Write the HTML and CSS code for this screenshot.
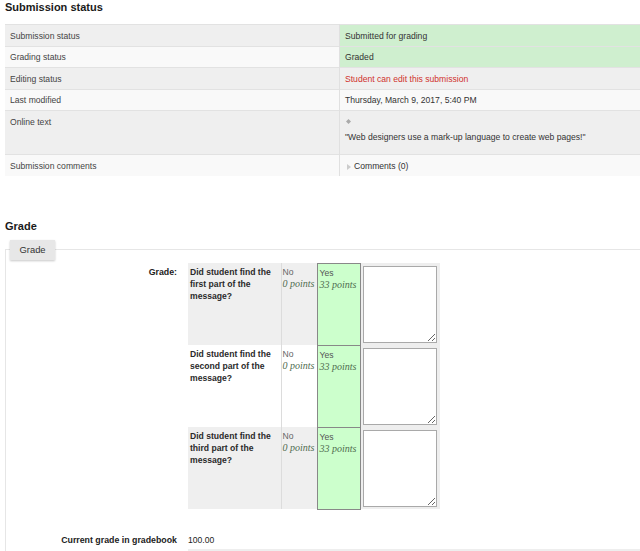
FILE: index.html
```html
<!doctype html>
<html lang="en">
<head>
  <meta charset="utf-8">
  <title>Submission status</title>
  <link rel="stylesheet" href="styles.css">
</head>
<body>
	<div class="page">
		<h3 class="sect">Submission status</h3>
		<table class="status">
			<tr class="odd">
				<td class="lbl">Submission status</td>
				<td class="ok">Submitted for grading</td>
			</tr>
			<tr class="even">
				<td class="lbl">Grading status</td>
				<td class="ok">Graded</td>
			</tr>
			<tr class="odd">
				<td class="lbl">Editing status</td>
				<td class="warn">Student can edit this submission</td>
			</tr>
			<tr class="even">
				<td class="lbl">Last modified</td>
				<td>Thursday, March 9, 2017, 5:40 PM</td>
			</tr>
			<tr class="odd">
				<td class="lbl">Online text</td>
				<td>
					<div class="expand"><svg width="5" height="5" viewBox="0 0 5 5"><path d="M2.5 0 L5 2.5 L2.5 5 L0 2.5 Z" fill="#aaa"/></svg></div>
					<p class="quote">"Web designers use a mark-up language to create web pages!"</p>
				</td>
			</tr>
			<tr class="even">
				<td class="lbl">Submission comments</td>
				<td><span class="tri"></span>Comments (0)</td>
			</tr>
		</table>

		<h3 class="sect grade-h">Grade</h3>
		<fieldset class="grade-box">
			<legend>Grade</legend>
			<div class="frow">
				<div class="flabel">Grade:</div>
				<div class="fval">
					<table class="rubric">
						<col class="c-crit"><col class="c-no"><col class="c-yes"><col class="c-rem">
						<tr class="r-grey">
							<td class="crit">Did student find the first part of the message?</td>
							<td class="level">No<div class="score">0 points</div></td>
							<td class="level checked">Yes<div class="score">33 points</div></td>
							<td class="remark"><textarea></textarea></td>
						</tr>
						<tr class="r-white">
							<td class="crit">Did student find the second part of the message?</td>
							<td class="level">No<div class="score">0 points</div></td>
							<td class="level checked">Yes<div class="score">33 points</div></td>
							<td class="remark"><textarea></textarea></td>
						</tr>
						<tr class="r-grey">
							<td class="crit">Did student find the third part of the message?</td>
							<td class="level">No<div class="score">0 points</div></td>
							<td class="level checked">Yes<div class="score">33 points</div></td>
							<td class="remark"><textarea></textarea></td>
						</tr>
					</table>
				</div>
			</div>
			<div class="frow current">
				<div class="flabel">Current grade in gradebook</div>
				<div class="fval">100.00</div>
			</div>
			<div class="frow">
				<div class="flabel"></div>
				<div class="fval next"></div>
			</div>
		</fieldset>
	</div>
</body>
</html>
```

FILE: styles.css
```css
html,body{
	margin:0; padding:0;
	background:#fff;
	font-family:"Liberation Sans", Arial, sans-serif;
	font-size:8.6px;
	color:#333;
}
.page{ padding-left:5px; }

.sect{
	margin:0 0 10px 0;
	padding-top:1px;
	font-size:11px;
	line-height:13px;
	font-weight:bold;
	color:#1a1a1a;
}
.grade-h{ margin-top:43px; margin-bottom:7px; }

/* submission status table */
table.status{ width:100%; border-collapse:collapse; }
table.status td{
	padding:4.6px 5px 4px 5px;
	line-height:12px;
	vertical-align:top;
	border-top:1px solid #e2e2e2;
}
table.status td.lbl{ width:324px; border-right:1px solid #e0e0e0; color:#444; }
table.status tr.odd td{ background:#efefef; }
table.status tr.even td{ background:#f9f9f9; }
table.status tr td.ok{ background:#cfefcf; }
table.status td.warn{ color:#d0312d; }
.expand{ height:12px; padding-left:1px; }
.expand svg{ display:block; margin-top:3px; }
.quote{ margin:0 0 7px 0; }
.tri{
	display:inline-block;
	width:0; height:0;
	border-left:4px solid #ccc;
	border-top:3.5px solid transparent;
	border-bottom:3.5px solid transparent;
	margin:0 3px 0 2px;
	vertical-align:-1px;
}

/* grade form */
fieldset.grade-box{
	margin:0;
	padding:3px 0 0 0;
	border:1px solid #e6e6e6;
	border-right:none;
	min-width:0;
}
fieldset.grade-box > legend{
	margin-left:4px;
	padding:0 9.5px;
	height:20px;
	line-height:20px;
	font-size:9.4px;
	color:#333;
	background:#e7e7e7;
	box-shadow:0 1px 2px rgba(0,0,0,0.22);
}
.frow{
	display:grid;
	grid-template-columns:171px 1fr;
	column-gap:11px;
}
.flabel{
	text-align:right;
	font-weight:bold;
	font-size:8.8px;
	line-height:12px;
	padding-top:3px;
	color:#222;
}
.frow.current{ margin-top:24px; }
.frow.current .flabel{ padding-top:0; }
.frow.current .fval{ line-height:12px; color:#222; }
.fval.next{ margin-top:3px; height:40px; background:#eee; }

/* rubric */
table.rubric{
	width:252px;
	table-layout:fixed;
	border-collapse:collapse;
}
col.c-crit{ width:93px; }
col.c-no{ width:36px; }
col.c-yes{ width:43px; }
col.c-rem{ width:80px; }
table.rubric td{
	vertical-align:top;
	line-height:12px;
	padding:3px 2px 0 2px;
}
table.rubric td.crit{ font-weight:bold; color:#2a2a2a; }
table.rubric td.level{
	padding-left:1px;
	color:#666;
	border-left:1px solid #dcdcdc;
	white-space:nowrap;
}
table.rubric tr.r-grey td.crit,
table.rubric tr.r-grey td.level{ background:#efefef; }
table.rubric tr.r-white td.crit,
table.rubric tr.r-white td.level{ background:#fff; }
table.rubric tr td.level.checked{
	background:#ccffcc;
	border:1px solid #888;
	padding-left:2px;
	color:#555;
}
.score{
	font-style:italic;
	color:#4f6d4f;
	font-family:"Liberation Serif", "Times New Roman", serif;
	font-size:10px;
}
table.rubric td.remark{
	background:#eee;
	padding:3px 2px 2px 2px;
}
table.rubric textarea{
	display:block;
	box-sizing:border-box;
	width:74px;
	height:77px;
	margin:0;
	border:1px solid #a9a9a9;
	background:#fff;
}
```
